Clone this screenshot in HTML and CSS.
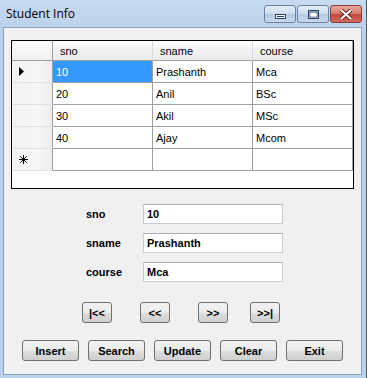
FILE: index.html
```html
<!DOCTYPE html>
<html lang="en">
<head>
  <meta charset="UTF-8">
  <title>Student Info</title>
  <link rel="stylesheet" href="styles.css">
</head>
<body>
  <div class="window">
    <div class="titlebar">
      <span class="title">Student Info</span>
      <div class="caption-btns">
        <span class="cbtn min">
          <svg width="11" height="5" viewBox="0 0 11 5"><rect x="0.5" y="0.5" width="10" height="4" fill="#fff" stroke="#27406a"/><rect x="2" y="2" width="7" height="1" fill="#27406a"/></svg>
        </span>
        <span class="cbtn max">
          <svg width="11" height="9" viewBox="0 0 11 9"><rect x="0.5" y="0.5" width="10" height="8" fill="#fff" stroke="#27406a"/><rect x="2" y="2" width="7" height="5" fill="none" stroke="#27406a" stroke-width="1"/><rect x="2.5" y="3.5" width="6" height="3" fill="#fff"/></svg>
        </span>
        <span class="cbtn close">
          <svg width="14" height="11" viewBox="0 0 14 11"><path d="M2 1 L12 10 M12 1 L2 10" stroke="#5a1d16" stroke-width="4"/><path d="M2 1 L12 10 M12 1 L2 10" stroke="#fff" stroke-width="2.2"/></svg>
        </span>
      </div>
    </div>

    <div class="client">
      <div class="datagrid">
        <div class="table">
          <div class="corner"></div>
          <div class="colhead">sno</div>
          <div class="colhead">sname</div>
          <div class="colhead">course</div>

          <div class="rowhead"><svg width="5" height="9" viewBox="0 0 5 9"><polygon points="0,0 5,4.5 0,9" fill="#000"/></svg></div>
          <div class="cell selected">10</div>
          <div class="cell">Prashanth</div>
          <div class="cell">Mca</div>

          <div class="rowhead"></div>
          <div class="cell">20</div>
          <div class="cell">Anil</div>
          <div class="cell">BSc</div>

          <div class="rowhead"></div>
          <div class="cell">30</div>
          <div class="cell">Akil</div>
          <div class="cell">MSc</div>

          <div class="rowhead"></div>
          <div class="cell">40</div>
          <div class="cell">Ajay</div>
          <div class="cell">Mcom</div>

          <div class="rowhead"><svg width="9" height="9" viewBox="0 0 9 9"><path d="M4.5 0 V9 M0 4.5 H9 M1.3 1.3 L7.7 7.7 M7.7 1.3 L1.3 7.7" stroke="#000" stroke-width="1"/></svg></div>
          <div class="cell"></div>
          <div class="cell"></div>
          <div class="cell"></div>
        </div>
      </div>

      <div class="form">
        <label for="sno">sno</label>
        <input id="sno" type="text" value="10">
        <label for="sname">sname</label>
        <input id="sname" type="text" value="Prashanth">
        <label for="course">course</label>
        <input id="course" type="text" value="Mca">
      </div>

      <div class="nav">
        <button class="btn nav-btn">|&lt;&lt;</button>
        <button class="btn nav-btn">&lt;&lt;</button>
        <button class="btn nav-btn">&gt;&gt;</button>
        <button class="btn nav-btn last">&gt;&gt;|</button>
      </div>

      <div class="actions">
        <button class="btn">Insert</button>
        <button class="btn">Search</button>
        <button class="btn">Update</button>
        <button class="btn">Clear</button>
        <button class="btn">Exit</button>
      </div>
    </div>
  </div>
</body>
</html>
```

FILE: styles.css
```css
body { margin: 0; background: #b9d1ea; font-family: "Liberation Sans", Arial, sans-serif; font-size: 11px; }

.window { width: 367px; height: 378px; box-sizing: border-box; padding: 0 4px 2px 3px;
  background: linear-gradient(#c7dbf0, #b9d1ea 30px); border-right: 1px solid #44606e; overflow: hidden; }

/* title bar */
.titlebar { height: 27px; display: flex; align-items: flex-start; justify-content: space-between; }
.title { font-family: "Open Sans", sans-serif; font-size: 12px; color: #000; margin: 5px 0 0 3px; }
.caption-btns { display: flex; gap: 1px; margin-top: 5px; }
.cbtn { height: 18px; box-sizing: border-box; border: 1px solid #6b84a8; border-radius: 3px;
  display: flex; align-items: center; justify-content: center;
  background: linear-gradient(#e3edf8, #cbdcee 50%, #b6cae3 51%, #c8d9ec); }
.cbtn.min { width: 32px; }
.cbtn.min svg { margin-top: 5px; }
.cbtn.max { width: 32px; }
.cbtn.close { width: 32px; border-color: #8c3b32;
  background: linear-gradient(#e7a89b, #d3786a 50%, #c1483b 51%, #cf6d5f); }

/* client area */
.client { height: 348px; box-sizing: border-box; background: #f0f0f0; border: 1px solid #8da2bd;
  padding: 12px 0 0 7px; }

.datagrid { width: 343px; height: 149px; box-sizing: border-box; border: 1px solid #000; background: #fff; }
.table { display: grid; grid-template-columns: 41px 100px 100px 100px; grid-template-rows: 20px repeat(5, 22px); }
.table > div { box-sizing: border-box; display: flex; align-items: center; }
.corner { background: linear-gradient(#fcfcfc, #f0f0f0); border-right: 1px solid #a0a0a0; border-bottom: 1px solid #a0a0a0; }
.colhead { padding-left: 7px; background: linear-gradient(#ffffff, #f1f2f4 50%, #e9eaec); border-right: 1px solid #d8dadd;
  border-bottom: 1px solid #a0a0a0; }
.colhead:nth-child(4) { border-right-color: #a0a0a0; }
.rowhead { padding-left: 7px; background: linear-gradient(to right, #f3f3f3, #f6f6f7 70%, #ececee);
  border-right: 1px solid #a0a0a0; border-bottom: 1px solid #e2e2e2; }
.cell { padding-left: 3px; border-right: 1px solid #a0a0a0; border-bottom: 1px solid #a0a0a0; background: #fff; }
.cell.selected { background: #3399ff; color: #fff; }

/* form */
.form { display: grid; grid-template-columns: 57px 140px; row-gap: 9px; align-items: center;
  margin: 15px 0 0 75px; }
label { font-weight: bold; }
input { height: 20px; box-sizing: border-box; border: 1px solid #c9ccd2; border-top-color: #abadb3;
  padding: 0 0 0 3px; font: bold 11px "Liberation Sans", Arial, sans-serif; color: #000; background: #fff; }

/* buttons */
.btn { height: 21px; padding: 0; border: 1px solid #707070; border-radius: 3px; color: #000;
  font: bold 11px "Liberation Sans", Arial, sans-serif;
  background: linear-gradient(#f2f2f2, #ebebeb 50%, #dddddd 51%, #cfcfcf); }
.nav { display: flex; gap: 28px; margin: 20px 0 0 71px; }
.nav-btn { width: 30px; }
.nav .last { margin-left: -6px; }
.actions { display: flex; gap: 9px; margin: 17px 0 0 11px; }
.actions .btn { width: 57px; }
```
